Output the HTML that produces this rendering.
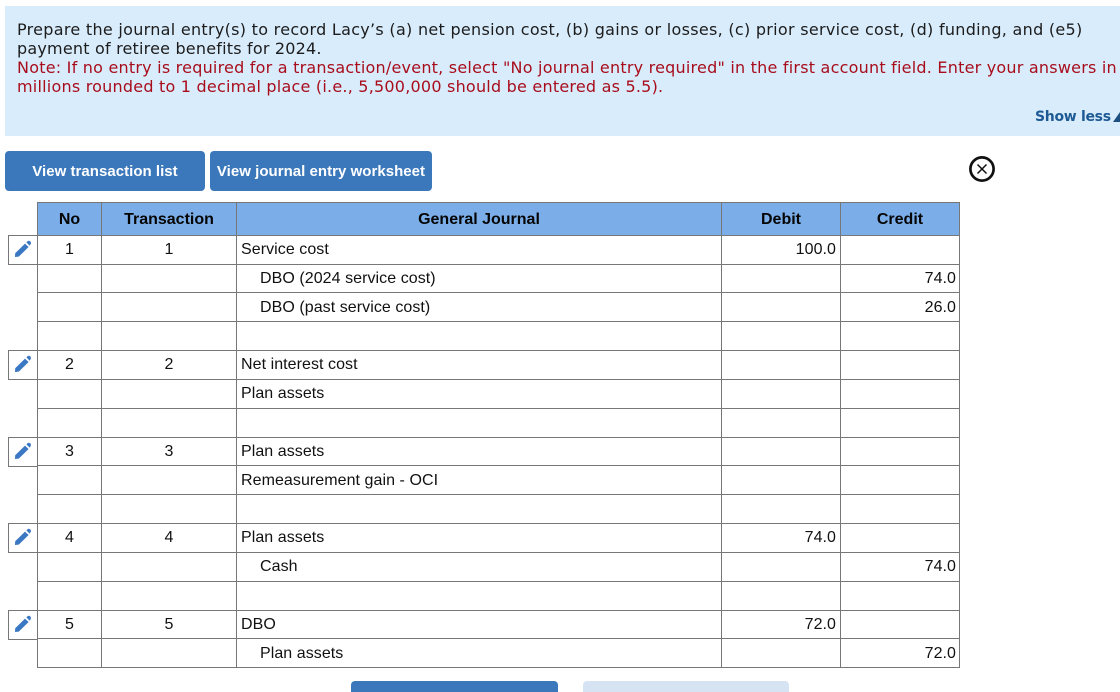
<!DOCTYPE html>
<html><head><meta charset="utf-8"><style>
html,body{margin:0;padding:0;width:1120px;height:692px;overflow:hidden;background:#fff}
body{position:relative;font-family:"Liberation Sans",sans-serif;color:#111}
.a{position:absolute}
.t{position:absolute;left:17px;font:16px/19px "DejaVu Sans",sans-serif;white-space:nowrap;color:#1c1c1c}
.r{color:#a80d1c}
.btn{position:absolute;top:151px;height:40px;background:#3b78bb;border-radius:4px;color:#fff;font:bold 15px/42px "Liberation Sans",sans-serif;letter-spacing:.03px;text-align:center;white-space:nowrap}
.h{position:absolute;left:37px;width:923px;height:1px;background:#777}
.v{position:absolute;top:202px;width:1px;height:466px;background:#777}
.c{position:absolute;font-size:16px;line-height:20px;margin-top:1px;letter-spacing:.06px;white-space:nowrap;color:#111}
.th{position:absolute;top:210px;font-weight:bold;font-size:16px;line-height:20px;text-align:center;color:#050505}
.box{position:absolute;left:8px;width:29px;height:28px;border:1px solid #777;border-right:0;box-sizing:content-box}
.n1{left:38px;width:63px;text-align:center}
.n2{left:102px;width:134px;text-align:center}
.g{left:241px}
.g2{left:260px}
.d{left:722px;width:114px;text-align:right}
.k{left:841px;width:115px;text-align:right}
</style></head><body>
<div class="a" style="left:5px;top:6px;width:1115px;height:130px;background:#d9ecfb"></div>
<div class="t" style="top:20px;letter-spacing:.29px">Prepare the journal entry(s) to record Lacy’s (a) net pension cost, (b) gains or losses, (c) prior service cost, (d) funding, and (e5)</div>
<div class="t" style="top:39px;letter-spacing:.2px">payment of retiree benefits for 2024.</div>
<div class="t r" style="top:58px;letter-spacing:.22px">Note: If no entry is required for a transaction/event, select "No journal entry required" in the first account field. Enter your answers in</div>
<div class="t r" style="top:77px;letter-spacing:.22px">millions rounded to 1 decimal place (i.e., 5,500,000 should be entered as 5.5).</div>
<div class="a" style="left:1035px;top:108px;font:bold 14px/18px 'DejaVu Sans',sans-serif;letter-spacing:-.3px;color:#1d5a94;white-space:nowrap">Show less</div>
<svg class="a" style="left:1113px;top:111px" width="7" height="12"><path d="M0 11 L7 1 L7 11Z" fill="#1d4f80"/></svg>

<div class="btn" style="left:5px;width:200px">View transaction list</div>
<div class="btn" style="left:210px;width:222px">View journal entry worksheet</div>
<svg class="a" style="left:968px;top:155px" width="28" height="28" viewBox="0 0 28 28"><circle cx="14" cy="14" r="11.6" fill="#fff" stroke="#111" stroke-width="2.7"/><path d="M9.5 9.5 L18.5 18.5 M18.5 9.5 L9.5 18.5" stroke="#111" stroke-width="1.5" fill="none"/></svg>

<div class="a" style="left:37px;top:202px;width:923px;height:33px;background:#7baee8"></div>

<div class="h" style="top:202px"></div><div class="h" style="top:235px"></div><div class="h" style="top:264px"></div><div class="h" style="top:292px"></div><div class="h" style="top:321px"></div><div class="h" style="top:350px"></div><div class="h" style="top:379px"></div><div class="h" style="top:408px"></div><div class="h" style="top:437px"></div><div class="h" style="top:465px"></div><div class="h" style="top:494px"></div><div class="h" style="top:523px"></div><div class="h" style="top:552px"></div><div class="h" style="top:581px"></div><div class="h" style="top:610px"></div><div class="h" style="top:638px"></div><div class="h" style="top:667px"></div>
<div class="v" style="left:37px"></div><div class="v" style="left:101px"></div><div class="v" style="left:236px"></div><div class="v" style="left:721px"></div><div class="v" style="left:840px"></div><div class="v" style="left:959px"></div>

<div class="th" style="left:38px;width:63px">No</div>
<div class="th" style="left:102px;width:134px">Transaction</div>
<div class="th" style="left:237px;width:484px">General Journal</div>
<div class="th" style="left:722px;width:118px">Debit</div>
<div class="th" style="left:841px;width:118px">Credit</div>

<div class="box" style="top:235px"></div><div class="box" style="top:350px"></div><div class="box" style="top:437px"></div><div class="box" style="top:523px"></div><div class="box" style="top:610px"></div>
<svg class="a" style="left:14px;top:240px" width="18" height="18" viewBox="0 0 18 18"><path d="M1 17 L1.2 13.2 L11 3.6 L14.6 7 L4.8 16.6Z M12.4 2.4 L13.8 1 Q15 .4 16.2 1.4 L16.6 1.8 Q17.4 3 16.6 4.2 L15.6 5.6Z" fill="#3b78c4"/></svg>
<svg class="a" style="left:14px;top:355px" width="18" height="18" viewBox="0 0 18 18"><path d="M1 17 L1.2 13.2 L11 3.6 L14.6 7 L4.8 16.6Z M12.4 2.4 L13.8 1 Q15 .4 16.2 1.4 L16.6 1.8 Q17.4 3 16.6 4.2 L15.6 5.6Z" fill="#3b78c4"/></svg>
<svg class="a" style="left:14px;top:442px" width="18" height="18" viewBox="0 0 18 18"><path d="M1 17 L1.2 13.2 L11 3.6 L14.6 7 L4.8 16.6Z M12.4 2.4 L13.8 1 Q15 .4 16.2 1.4 L16.6 1.8 Q17.4 3 16.6 4.2 L15.6 5.6Z" fill="#3b78c4"/></svg>
<svg class="a" style="left:14px;top:528px" width="18" height="18" viewBox="0 0 18 18"><path d="M1 17 L1.2 13.2 L11 3.6 L14.6 7 L4.8 16.6Z M12.4 2.4 L13.8 1 Q15 .4 16.2 1.4 L16.6 1.8 Q17.4 3 16.6 4.2 L15.6 5.6Z" fill="#3b78c4"/></svg>
<svg class="a" style="left:14px;top:615px" width="18" height="18" viewBox="0 0 18 18"><path d="M1 17 L1.2 13.2 L11 3.6 L14.6 7 L4.8 16.6Z M12.4 2.4 L13.8 1 Q15 .4 16.2 1.4 L16.6 1.8 Q17.4 3 16.6 4.2 L15.6 5.6Z" fill="#3b78c4"/></svg>

<div class="c n1" style="top:239px">1</div><div class="c n2" style="top:239px">1</div><div class="c g" style="top:239px">Service cost</div><div class="c d" style="top:239px">100.0</div>
<div class="c g2" style="top:268px">DBO (2024 service cost)</div><div class="c k" style="top:268px">74.0</div>
<div class="c g2" style="top:297px">DBO (past service cost)</div><div class="c k" style="top:297px">26.0</div>

<div class="c n1" style="top:354px">2</div><div class="c n2" style="top:354px">2</div><div class="c g" style="top:354px">Net interest cost</div>
<div class="c g" style="top:383px">Plan assets</div>

<div class="c n1" style="top:441px">3</div><div class="c n2" style="top:441px">3</div><div class="c g" style="top:441px">Plan assets</div>
<div class="c g" style="top:470px">Remeasurement gain - OCI</div>

<div class="c n1" style="top:527px">4</div><div class="c n2" style="top:527px">4</div><div class="c g" style="top:527px">Plan assets</div><div class="c d" style="top:527px">74.0</div>
<div class="c g2" style="top:556px">Cash</div><div class="c k" style="top:556px">74.0</div>

<div class="c n1" style="top:614px">5</div><div class="c n2" style="top:614px">5</div><div class="c g" style="top:614px">DBO</div><div class="c d" style="top:614px">72.0</div>
<div class="c g2" style="top:643px">Plan assets</div><div class="c k" style="top:643px">72.0</div>

<div class="a" style="left:351px;top:681px;width:207px;height:20px;background:#3b78bb;border-radius:4px"></div>
<div class="a" style="left:583px;top:681px;width:206px;height:20px;background:#d6e3f2;border-radius:4px"></div>
</body></html>
